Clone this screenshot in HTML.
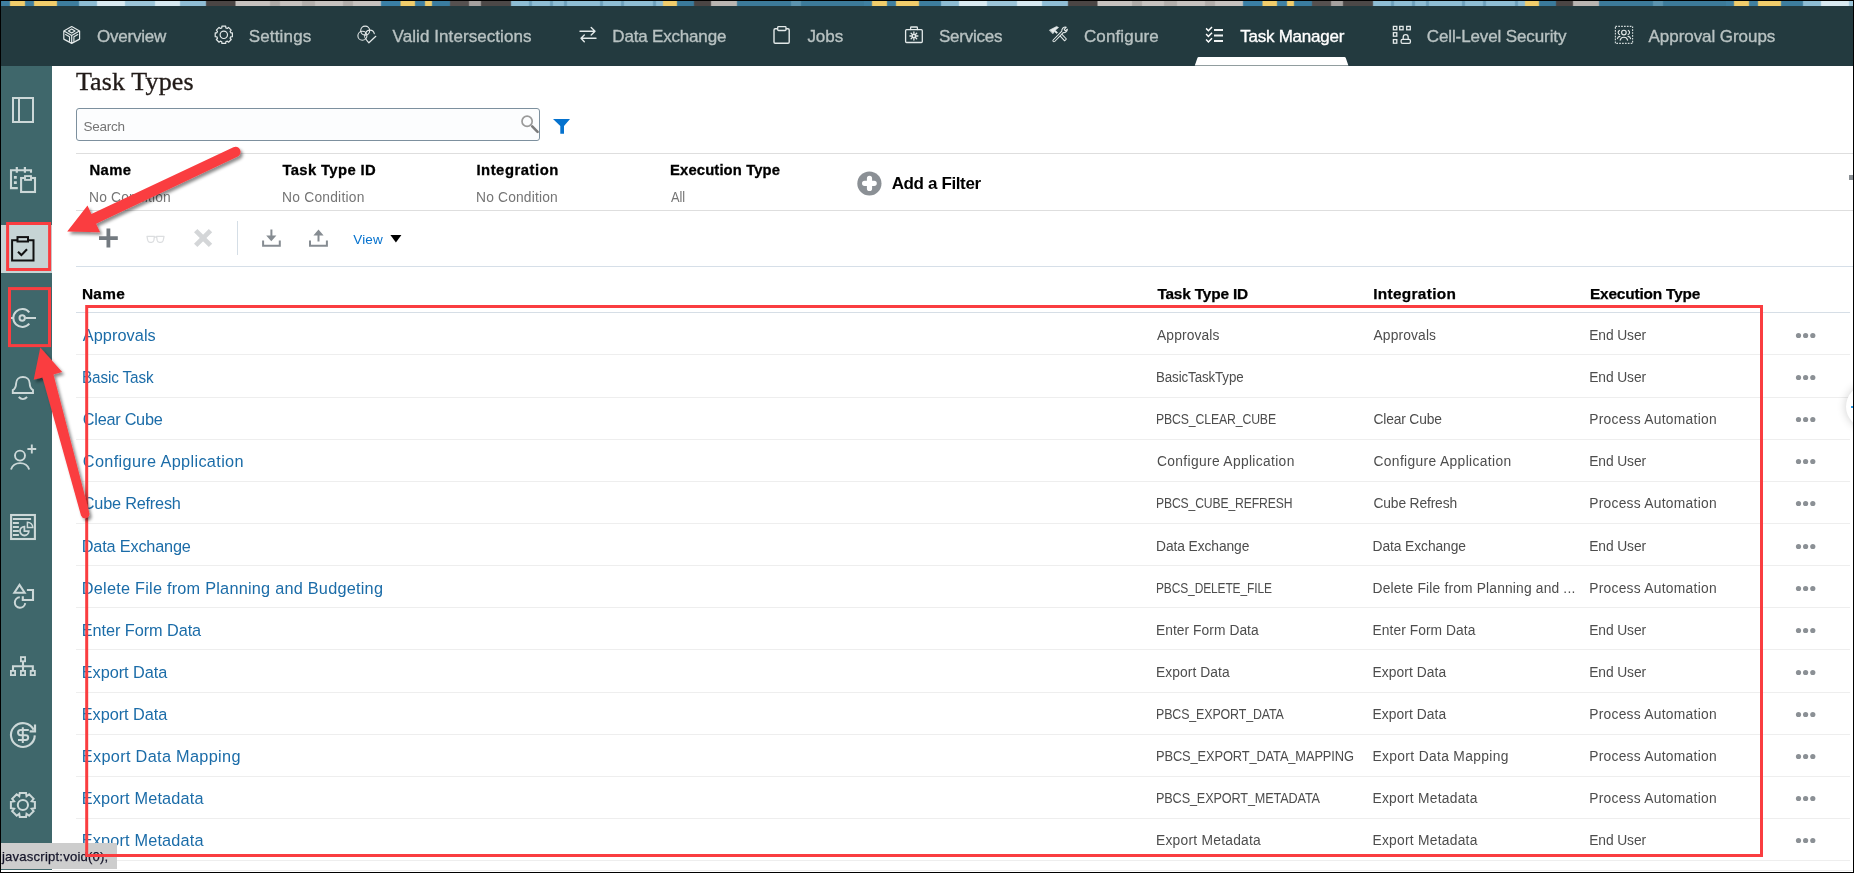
<!DOCTYPE html>
<html><head><meta charset="utf-8"><title>Task Types</title>
<style>
html,body{margin:0;padding:0}
body{width:1854px;height:873px;overflow:hidden;position:relative;background:#fff;font-family:"Liberation Sans", sans-serif}
.abs{position:absolute}
.t{position:absolute;white-space:pre;line-height:1;font-family:"Liberation Sans", sans-serif;z-index:8}
.rl{position:absolute;left:76px;width:1774px;height:1px;background:#eeeeee}
.hl{position:absolute;left:76px;width:1778px;height:1px;background:#dedede}
</style></head><body>
<!-- decorative strip + nav -->
<div class="abs" style="left:1px;top:1px;width:1852px;height:5px;background:repeating-linear-gradient(90deg,#3f7fa0 0.7px,#3f7fa0 8.3px,#f1cd6b 9.7px,#f1cd6b 23.3px,#3f7fa0 24.7px,#3f7fa0 32.3px,#f1cd6b 33.7px,#f1cd6b 55.3px,#3d7d9e 56.7px,#3d7d9e 77.3px,#8dbcd3 78.7px,#8dbcd3 95.3px,#d9eaf1 96.7px,#d9eaf1 123.3px,#9cc5d9 124.7px,#9cc5d9 153.3px,#d6e9f1 154.7px,#d6e9f1 178.3px,#8fbdd5 179.7px,#8fbdd5 204.3px,#4a4544 205.7px,#4a4544 233.8px,#c6c2bf 235.2px,#c6c2bf 268.3px,#aeaaa7 269.7px,#aeaaa7 278.3px,#c6c2bf 279.7px,#c6c2bf 300.3px,#b2aeab 301.7px,#b2aeab 313.3px,#c6c2bf 314.7px,#c6c2bf 341.3px,#b0aca9 342.7px,#b0aca9 351.3px,#c6c2bf 352.7px,#c6c2bf 379.3px,#3a7fa5 380.7px,#3a7fa5 398.8px,#f1cd6b 400.2px,#f1cd6b 413.3px,#3f81a4 414.7px,#3f81a4 423.3px,#f1cd6b 424.7px,#f1cd6b 430.3px,#3a7c9f 431.7px,#3a7c9f 448.3px,#55504f 449.7px,#55504f 467.3px,#a5a19f 468.7px,#a5a19f 479.3px,#4c4847 480.7px,#4c4847 509.3px,#8ebdd4 510.7px,#8ebdd4 527.3px,#6c9fba 528.7px,#6c9fba 530.3px,#8ebdd4 531.7px,#8ebdd4 548.3px,#6c9fba 549.7px,#6c9fba 551.3px,#8ebdd4 552.7px,#8ebdd4 562.3px,#6c9fba 563.7px,#6c9fba 565.3px,#8ebdd4 566.7px,#8ebdd4 598.3px,#6c9fba 599.7px,#6c9fba 601.3px,#8ebdd4 602.7px,#8ebdd4 619.3px,#6c9fba 620.7px,#6c9fba 622.3px,#8ebdd4 623.7px,#8ebdd4 651.3px,#6c9fba 652.7px,#6c9fba 654.3px,#8ebdd4 655.7px,#8ebdd4 661.3px,#f1cd6b 662.7px,#f1cd6b 675.3px,#3a7a9b 676.7px,#3a7a9b 692.3px,#4a4544 693.7px,#4a4544 709.3px,#b9b5b2 710.7px,#b9b5b2 735.3px,#3c7a99 736.7px,#3c7a99 789.3px,#5b93ae 790.7px,#5b93ae 799.3px,#3c7a99 800.7px,#3c7a99 862.6999999999999px)"></div>
<div class="abs" style="left:1px;top:6px;width:1852px;height:59.5px;background:#233a3f"></div>
<svg class="abs" style="left:1190px;top:54px" width="164" height="12" viewBox="1190 54 164 12"><path d="M1194.8 65.6L1197.4 57.9Q1197.7 56.9 1198.8 56.9H1344.4Q1345.5 56.9 1345.8 57.9L1348.4 65.6Z" fill="#fff"/></svg>

<svg class="abs" style="left:0;top:0" width="1854" height="66" viewBox="0 0 1854 66" fill="none" stroke="#e3e9e9" stroke-width="1.3" stroke-linejoin="round" stroke-linecap="round">
 <!-- overview cube -->
 <path d="M71.7 26.6L79.6 31V39.1L71.7 43.4L63.8 39.1V31Z M64 31.1L71.7 35.5L79.4 31.1 M71.7 35.5V43.2" stroke-width="1.2"/>
 <path d="M71.7 28.9L75 30.9L71.7 32.9L68.4 30.9Z M65.6 34.5L69.5 36.8V41.3 M77.8 34.5L73.9 36.8V41.3" stroke-width="1.15"/>
 <!-- settings gear -->
 <path d="M221.79 27.89L221.88 26.21L225.72 26.21L225.81 27.89L227.27 28.49L228.52 27.37L231.23 30.08L230.11 31.33L230.71 32.79L232.39 32.88L232.39 36.72L230.71 36.81L230.11 38.27L231.23 39.52L228.52 42.23L227.27 41.11L225.81 41.71L225.72 43.39L221.88 43.39L221.79 41.71L220.33 41.11L219.08 42.23L216.37 39.52L217.49 38.27L216.89 36.81L215.21 36.72L215.21 32.88L216.89 32.79L217.49 31.33L216.37 30.08L219.08 27.37L220.33 28.49Z" stroke-width="1.2"/>
 <circle cx="223.8" cy="34.8" r="3.7" stroke-width="1.2"/>
 <!-- valid intersections -->
 <circle cx="365.2" cy="30.6" r="4.5" stroke-width="1.1"/>
 <circle cx="362.4" cy="35.8" r="4.5" stroke-width="1.1"/>
 <path d="M366.4 39.6A4.5 4.5 0 0 1 365.6 33.4A4.5 4.5 0 0 1 374.3 33.6" stroke-width="1.1"/>
 <path d="M366.8 40.3L368.9 42.8L375.8 36.3" stroke-width="1.2"/>
 <!-- data exchange -->
 <path d="M580 31.3H595 M591.2 27.4L595 31.3L591.2 35 M596 38.2H581 M584.3 35L581 38.2L584.3 41.8" stroke-width="1.4"/>
 <!-- jobs clipboard -->
 <path d="M777.2 28.8H775.2A1.2 1.2 0 0 0 774 30V42A1.2 1.2 0 0 0 775.2 43.2H788A1.2 1.2 0 0 0 789.2 42V30A1.2 1.2 0 0 0 788 28.8H786.4" stroke-width="1.4"/>
 <rect x="777.7" y="26.7" width="8.3" height="3.8" rx="0.8" stroke-width="1.3"/>
 <!-- services -->
 <rect x="905.6" y="29.7" width="16.7" height="12.8" rx="1" stroke-width="1.3"/>
 <path d="M910.6 29.6V27.8A0.8 0.8 0 0 1 911.4 27H916.6A0.8 0.8 0 0 1 917.4 27.8V29.6" stroke-width="1.3"/>
 <g stroke-width="1.3"><path d="M913.9 32V40 M909.9 36H917.9 M911.1 33.2L916.7 38.8 M916.7 33.2L911.1 38.8"/></g>
 <circle cx="913.9" cy="36" r="2.3" fill="#e3e9e9" stroke="none"/>
 <circle cx="913.9" cy="36" r="0.9" fill="#233a3f" stroke="none"/>
 <!-- configure: wrench + hammer -->
 <path d="M1053.2 40L1061.8 31.2A3.6 3.6 0 0 1 1066.3 27.2L1064.2 29.4L1065.3 30.9L1067.4 29.2A3.6 3.6 0 0 1 1063.2 32.6L1054.7 41.5A1.05 1.05 0 0 1 1053.2 40Z" stroke-width="1.05"/>
 <path d="M1060.3 36.2L1064.6 40.8L1066.4 39L1062 34.4" stroke-width="1.05"/>
 <path d="M1049.6 30.1L1056.6 26.4L1058.6 27.5L1055.3 30.2L1057.6 32.6L1056.4 33.4L1054.6 31.6L1053 33.6Z" fill="#e3e9e9" stroke-width="0.6"/>
 <!-- task manager checklist -->
 <g stroke="#ffffff" stroke-width="1.5"><path d="M1206.1 28.4L1208.4 30.7L1212 27 M1206.1 34L1208.4 36.4L1212 32.7 M1206.1 39.6L1208.4 42L1212 38.3" stroke-linecap="butt" stroke-linejoin="miter"/></g>
 <g stroke="#f0f3f3" stroke-width="1.9" stroke-linecap="butt"><path d="M1214 30H1223 M1214 35.5H1223 M1214 41H1223"/></g>
 <!-- cell-level security -->
 <g stroke-width="1.3" stroke-linejoin="miter"><rect x="1393.4" y="26.4" width="3.4" height="3.4"/><rect x="1399.7" y="26.4" width="3.4" height="3.4"/><rect x="1406.7" y="26.4" width="3.6" height="3.4"/><rect x="1393.4" y="32.7" width="3.4" height="3.5"/><rect x="1393.4" y="39.6" width="3.4" height="3.6"/></g>
 <rect x="1401.1" y="39.3" width="9.3" height="4" rx="1.4" stroke-width="1.3"/>
 <path d="M1403.2 39V37.4A2.5 2.7 0 0 1 1408.2 37.4V39" stroke-width="1.3"/>
 <!-- approval groups -->
 <rect x="1615.4" y="26.4" width="17.2" height="17" stroke-width="1.15" stroke-dasharray="1.7 1.17" stroke-linecap="butt" stroke="#d2dada"/>
 <circle cx="1623.9" cy="32.6" r="2.3" stroke-width="1.1"/>
 <path d="M1620.2 40.2A3.8 3.8 0 0 1 1627.6 40.2" stroke-width="1.2"/>
 <path d="M1619.4 30.4A2.3 2.3 0 0 0 1619.6 34.6 M1617.4 38.6A3 3 0 0 1 1620 36.4 M1628.3 30.4A2.3 2.3 0 0 1 1628.1 34.6 M1630.6 38.6A3 3 0 0 0 1628 36.4" stroke-width="1.1"/>
</svg>
<!-- sidebar -->
<div class="abs" style="left:1px;top:65.5px;width:50.6px;height:804.5px;background:#3f676b"></div>
<div class="abs" style="left:1px;top:224.8px;width:50.8px;height:48px;background:#c6d4d5"></div>

<svg class="abs" style="left:0;top:66px" width="52" height="807" viewBox="0 66 52 807" fill="none" stroke="#ccd8d8" stroke-width="2" stroke-linejoin="miter">
 <!-- 1 panel -->
 <rect x="13" y="98" width="20" height="24"/><path d="M19 98V122"/>
 <!-- 2 calendar + clipboard -->
 <path d="M17.8 188.1H11V170.2H31V172.8" stroke-width="2.1"/>
 <path d="M16.8 167.1V172.8 M24.9 167.1V172.8" stroke-width="2.2"/>
 <path d="M13.9 177.4H16.8 M13.9 182.6H16.8" stroke-width="2.9"/>
 <rect x="21.1" y="178" width="13.9" height="14" stroke-width="2.1"/>
 <rect x="25" y="176.1" width="6" height="3.8" stroke-width="1.9" fill="#3f676b"/>
 <!-- 4 C-arc icon -->
 <path d="M29.3 312.3A9 9 0 1 0 29.3 323.7" stroke-width="2"/>
 <circle cx="22.2" cy="318" r="2.7" stroke-width="2"/>
 <path d="M25.4 318H36 M11 318H13.4" stroke-width="2"/>
 <!-- 5 bell -->
 <path d="M12.8 393H33V390.1C30.5 388.6 29.8 386.4 29.7 383.4C29.6 379.4 26.6 377 22.9 377C19.2 377 16.2 379.4 16.1 383.4C16 386.4 15.3 388.6 12.8 390.1Z" stroke-width="1.9" stroke-linejoin="miter"/>
 <path d="M18.7 397Q22.9 401.2 27.1 397" stroke-width="1.9"/>
 <!-- 6 person plus -->
 <circle cx="20" cy="455.6" r="5" stroke-width="1.9"/>
 <path d="M11 469.4A9.4 8.4 0 0 1 29.2 469.4" stroke-width="1.9"/>
 <path d="M31.8 444.6V453.4 M27.4 449H36.2" stroke-width="1.9"/>
 <!-- 7 report -->
 <rect x="11.1" y="515" width="23.8" height="24" stroke-width="2.1"/>
 <path d="M12.9 519H31.1 M12.9 523H18.9 M12.9 527H18.9 M12.9 531H18.9 M12.9 535H18.9" stroke-width="1.8"/>
 <path d="M24.4 526.7A4.4 4.4 0 1 0 28.8 531.1H24.4Z" stroke-width="1.8"/>
 <path d="M27.4 522.2V527.6H32.8A5.4 5.4 0 0 0 27.4 522.2Z" stroke-width="1.5"/>
 <!-- 8 shapes -->
 <path d="M19.5 584.9L24.7 592.8H14.3Z" stroke-width="2"/>
 <path d="M26.9 590H33V600H22.8V596.2" stroke-width="2.1"/>
 <path d="M19.8 597.3A5.2 5.2 0 1 0 25.2 603.1" stroke-width="2"/>
 <!-- 9 hierarchy -->
 <g stroke-width="1.8"><rect x="20.9" y="657.1" width="4.2" height="4.2"/><rect x="10.9" y="670.9" width="4.2" height="4.2"/><rect x="20.9" y="670.9" width="4.2" height="4.2"/><rect x="30.7" y="670.9" width="4.2" height="4.2"/>
 <path d="M23 662V670 M13 670V666.3H32.8V670" stroke-width="2.1"/></g>
 <!-- 10 dollar refresh -->
 <path d="M33.6 729.8A11.9 11.9 0 1 0 34.8 735.4" stroke-width="2.1"/>
 <path d="M35 724.4V731.3H29.6" stroke-width="2.2" stroke-linejoin="miter"/>
 <path d="M28.8 729.9H20.7A2.65 2.65 0 0 0 20.7 735.2H25.8A2.4 2.4 0 0 1 25.8 740H18 M22.8 727.2V743" stroke-width="2"/>
 <!-- 11 gear -->
 <path d="M19.75 793.00L26.05 793.00L26.54 796.22L29.16 794.29L33.61 798.74L31.68 801.36L34.90 801.85L34.90 808.15L31.68 808.64L33.61 811.26L29.16 815.71L26.54 813.78L26.05 817.00L19.75 817.00L19.26 813.78L16.64 815.71L12.19 811.26L14.12 808.64L10.90 808.15L10.90 801.85L14.12 801.36L12.19 798.74L16.64 794.29L19.26 796.22Z" stroke-width="2" stroke-linejoin="miter"/>
 <circle cx="22.9" cy="805" r="5.1" stroke-width="2"/>
</svg>
<!-- selected item icon (black) -->
<svg class="abs" style="left:0;top:222px;z-index:6" width="52" height="52" viewBox="0 222 52 52" fill="none" stroke="#111" stroke-width="2" stroke-linejoin="miter">
 <path d="M17 240.2H12.1V260.6H33.5V240.2H28.6"/>
 <rect x="17.5" y="237.1" width="10.5" height="4.4"/>
 <path d="M18 251.8L21.4 255.1L27 249.2" stroke-width="2.1"/>
</svg>
<!-- search -->
<div class="abs" style="left:76px;top:108px;width:462px;height:31px;border:1px solid #7d909e;border-radius:3px;background:#fcfdfe"></div>
<svg class="abs" style="left:515px;top:110px" width="60" height="28" viewBox="515 110 60 28" fill="none">
 <circle cx="527.1" cy="121.2" r="5.1" stroke="#9a9a9a" stroke-width="1.7"/>
 <path d="M532.2 126.4L537.6 131.8" stroke="#7c7c7c" stroke-width="2.6" stroke-linecap="round"/>
 <path d="M553 119.1H570L564 126V133.7H560.3V126Z" fill="#0572ce"/>
</svg>
<!-- filter bar lines -->
<div class="hl" style="top:153px"></div>
<div class="hl" style="top:210px"></div>
<div class="hl" style="top:266px;background:#d6dfe8"></div>
<!-- add filter icon -->
<svg class="abs" style="left:856px;top:170px" width="28" height="28" viewBox="856 170 28 28"><circle cx="869.4" cy="183.5" r="12.1" fill="#8b9095"/><path d="M864.6 183.3H874.2 M869.5 178.4V188.5" stroke="#fff" stroke-width="5.2" stroke-linecap="round"/></svg>
<!-- toolbar -->
<svg class="abs" style="left:90px;top:218px" width="330" height="44" viewBox="90 218 330 44" fill="none">
 <path d="M99 238.1H117.8 M108.4 228.6V247.6" stroke="#737a80" stroke-width="3.8"/>
 <g stroke="#dcdee0" stroke-width="1.25" stroke-linejoin="round"><path d="M147 236.3H154.4L153.9 240.2Q153.5 242.3 151.6 242.3H150Q148.2 242.3 147.7 240.2Z M156.6 236.3H164L163.3 240.2Q162.8 242.3 161 242.3H159.4Q157.5 242.3 157.1 240.2Z M154.4 237.4Q155.5 236.5 156.6 237.4"/></g>
 <path d="M195.7 230.6L210.5 245.4 M210.5 230.6L195.7 245.4" stroke="#d4d6d8" stroke-width="4.8"/>
 <path d="M237.5 221V255" stroke="#d5dee6" stroke-width="1"/>
 <g stroke="#868c92" stroke-width="2"><path d="M263.1 240.6V245.8H279.8V240.6 M310 240.6V245.8H326.9V240.6"/>
 <path d="M271.4 229.6V237 M318.5 241.4V234"/></g>
 <path d="M266.2 235.6H276.4L271.3 241.2Z M313.4 235.4H323.6L318.5 229.6Z" fill="#868c92"/>
 <path d="M390.4 235H401.4L395.9 242.6Z" fill="#000"/>
</svg>
<!-- table -->
<div class="hl" style="top:312px;width:1774px;background:#d6dee6"></div>
<div class="rl" style="top:354px"></div><div class="rl" style="top:397px"></div><div class="rl" style="top:439px"></div><div class="rl" style="top:481px"></div><div class="rl" style="top:523px"></div><div class="rl" style="top:565px"></div><div class="rl" style="top:607px"></div><div class="rl" style="top:649px"></div><div class="rl" style="top:692px"></div><div class="rl" style="top:734px"></div><div class="rl" style="top:776px"></div><div class="rl" style="top:818px"></div><div class="rl" style="top:860px"></div>
<svg class="abs" style="left:1790px;top:320px" width="30" height="540" viewBox="1790 320 30 540" fill="#8b9095"><circle cx="1798.5" cy="335.5" r="2.6"/><circle cx="1805.6" cy="335.5" r="2.6"/><circle cx="1812.8" cy="335.5" r="2.6"/><circle cx="1798.5" cy="377.5" r="2.6"/><circle cx="1805.6" cy="377.5" r="2.6"/><circle cx="1812.8" cy="377.5" r="2.6"/><circle cx="1798.5" cy="419.5" r="2.6"/><circle cx="1805.6" cy="419.5" r="2.6"/><circle cx="1812.8" cy="419.5" r="2.6"/><circle cx="1798.5" cy="461.5" r="2.6"/><circle cx="1805.6" cy="461.5" r="2.6"/><circle cx="1812.8" cy="461.5" r="2.6"/><circle cx="1798.5" cy="503.5" r="2.6"/><circle cx="1805.6" cy="503.5" r="2.6"/><circle cx="1812.8" cy="503.5" r="2.6"/><circle cx="1798.5" cy="546.5" r="2.6"/><circle cx="1805.6" cy="546.5" r="2.6"/><circle cx="1812.8" cy="546.5" r="2.6"/><circle cx="1798.5" cy="588.5" r="2.6"/><circle cx="1805.6" cy="588.5" r="2.6"/><circle cx="1812.8" cy="588.5" r="2.6"/><circle cx="1798.5" cy="630.5" r="2.6"/><circle cx="1805.6" cy="630.5" r="2.6"/><circle cx="1812.8" cy="630.5" r="2.6"/><circle cx="1798.5" cy="672.5" r="2.6"/><circle cx="1805.6" cy="672.5" r="2.6"/><circle cx="1812.8" cy="672.5" r="2.6"/><circle cx="1798.5" cy="714.5" r="2.6"/><circle cx="1805.6" cy="714.5" r="2.6"/><circle cx="1812.8" cy="714.5" r="2.6"/><circle cx="1798.5" cy="756.5" r="2.6"/><circle cx="1805.6" cy="756.5" r="2.6"/><circle cx="1812.8" cy="756.5" r="2.6"/><circle cx="1798.5" cy="798.5" r="2.6"/><circle cx="1805.6" cy="798.5" r="2.6"/><circle cx="1812.8" cy="798.5" r="2.6"/><circle cx="1798.5" cy="840.5" r="2.6"/><circle cx="1805.6" cy="840.5" r="2.6"/><circle cx="1812.8" cy="840.5" r="2.6"/></svg>
<!-- right edge details -->
<div class="abs" style="left:1800px;top:360px;width:53px;height:94px;overflow:hidden"><div class="abs" style="left:45.6px;top:25px;width:43px;height:43px;border-radius:50%;background:#fff;box-shadow:0 0 9px 1px rgba(0,0,0,0.16)"></div></div>
<div class="abs" style="left:1851px;top:405.5px;width:2px;height:2px;background:#2b9be8"></div>
<div class="abs" style="left:1849px;top:175px;width:4px;height:5px;background:#8b9095"></div>
<div class="abs" style="left:52px;top:870px;width:1801px;height:1px;background:#efefef"></div>
<!-- texts -->
<div class="abs" style="left:0;top:0;width:1854px;height:873px;will-change:transform;z-index:8">
<div class="t" style="left:97.00px;top:27px;line-height:19px;font-size:17px;color:#b8c2c2;letter-spacing:-0.224px;-webkit-text-stroke:0.35px #b8c2c2">Overview</div>
<div class="t" style="left:248.70px;top:27px;line-height:19px;font-size:17px;color:#b8c2c2;letter-spacing:0.168px;-webkit-text-stroke:0.35px #b8c2c2">Settings</div>
<div class="t" style="left:392.60px;top:27px;line-height:19px;font-size:17px;color:#b8c2c2;letter-spacing:0.070px;-webkit-text-stroke:0.35px #b8c2c2">Valid Intersections</div>
<div class="t" style="left:612.30px;top:27px;line-height:19px;font-size:17px;color:#b8c2c2;letter-spacing:-0.182px;-webkit-text-stroke:0.35px #b8c2c2">Data Exchange</div>
<div class="t" style="left:807.40px;top:27px;line-height:19px;font-size:17px;color:#b8c2c2;letter-spacing:-0.036px;-webkit-text-stroke:0.35px #b8c2c2">Jobs</div>
<div class="t" style="left:939.00px;top:27px;line-height:19px;font-size:17px;color:#b8c2c2;letter-spacing:-0.241px;-webkit-text-stroke:0.35px #b8c2c2">Services</div>
<div class="t" style="left:1083.90px;top:27px;line-height:19px;font-size:17px;color:#b8c2c2;letter-spacing:0.143px;-webkit-text-stroke:0.35px #b8c2c2">Configure</div>
<div class="t" style="left:1240.20px;top:27px;line-height:19px;font-size:17px;color:#ffffff;letter-spacing:-0.237px;-webkit-text-stroke:0.35px #ffffff">Task Manager</div>
<div class="t" style="left:1426.80px;top:27px;line-height:19px;font-size:17px;color:#b8c2c2;letter-spacing:-0.118px;-webkit-text-stroke:0.35px #b8c2c2">Cell-Level Security</div>
<div class="t" style="left:1648.60px;top:27px;line-height:19px;font-size:17px;color:#b8c2c2;letter-spacing:-0.062px;-webkit-text-stroke:0.35px #b8c2c2">Approval Groups</div>
<div class="t" style="left:75.90px;top:67px;line-height:29px;font-size:26px;font-family:&quot;Liberation Serif&quot;,serif;color:#221b18;letter-spacing:0.141px;-webkit-text-stroke:0.35px #221b18">Task Types</div>
<div class="t" style="left:83.50px;top:119px;line-height:15px;font-size:13.5px;color:#757575;letter-spacing:-0.273px">Search</div>
<div class="t" style="left:89.50px;top:162px;line-height:16px;font-size:14.8px;font-weight:700;color:#000000;letter-spacing:0.376px;-webkit-text-stroke:0.3px #000000">Name</div>
<div class="t" style="left:282.40px;top:162px;line-height:16px;font-size:14.8px;font-weight:700;color:#000000;letter-spacing:0.382px;-webkit-text-stroke:0.3px #000000">Task Type ID</div>
<div class="t" style="left:476.40px;top:162px;line-height:16px;font-size:14.8px;font-weight:700;color:#000000;letter-spacing:0.549px;-webkit-text-stroke:0.3px #000000">Integration</div>
<div class="t" style="left:670.10px;top:162px;line-height:16px;font-size:14.8px;font-weight:700;color:#000000;letter-spacing:0.128px;-webkit-text-stroke:0.3px #000000">Execution Type</div>
<div class="t" style="left:89.10px;top:190px;line-height:15px;font-size:13.8px;color:#757575;letter-spacing:0.165px">No Condition</div>
<div class="t" style="left:282.00px;top:190px;line-height:15px;font-size:13.8px;color:#757575;letter-spacing:0.237px">No Condition</div>
<div class="t" style="left:476.00px;top:190px;line-height:15px;font-size:13.8px;color:#757575;letter-spacing:0.174px">No Condition</div>
<div class="t" style="left:670.50px;top:190px;line-height:15px;font-size:13.8px;color:#757575;letter-spacing:-0.115px;transform:scaleX(0.9309);transform-origin:0 0">All</div>
<div class="t" style="left:891.70px;top:174px;line-height:19px;font-size:17px;font-weight:700;color:#000000;letter-spacing:-0.372px">Add a Filter</div>
<div class="t" style="left:353.30px;top:232px;line-height:15px;font-size:13.5px;color:#0572ce;letter-spacing:0.111px">View</div>
<div class="t" style="left:81.90px;top:285px;line-height:17px;font-size:15.4px;font-weight:700;color:#000000;letter-spacing:0.314px;-webkit-text-stroke:0.25px #000000">Name</div>
<div class="t" style="left:1157.40px;top:285px;line-height:17px;font-size:15.4px;font-weight:700;color:#000000;letter-spacing:-0.177px;-webkit-text-stroke:0.25px #000000">Task Type ID</div>
<div class="t" style="left:1373.20px;top:285px;line-height:17px;font-size:15.4px;font-weight:700;color:#000000;letter-spacing:0.319px;-webkit-text-stroke:0.25px #000000">Integration</div>
<div class="t" style="left:1590.00px;top:285px;line-height:17px;font-size:15.4px;font-weight:700;color:#000000;letter-spacing:-0.173px;-webkit-text-stroke:0.25px #000000">Execution Type</div>
<div class="t" style="left:82.80px;top:326px;line-height:18px;font-size:16.3px;color:#1b6ca8;letter-spacing:0.068px">Approvals</div>
<div class="t" style="left:1157.00px;top:328px;line-height:15px;font-size:13.8px;color:#4d4d4d;letter-spacing:0.131px">Approvals</div>
<div class="t" style="left:1373.50px;top:328px;line-height:15px;font-size:13.8px;color:#4d4d4d;letter-spacing:0.143px">Approvals</div>
<div class="t" style="left:1589.20px;top:328px;line-height:15px;font-size:13.8px;color:#4d4d4d;letter-spacing:-0.088px">End User</div>
<div class="t" style="left:81.86px;top:368px;line-height:18px;font-size:16.3px;color:#1b6ca8;letter-spacing:-0.129px;transform:scaleX(0.9385);transform-origin:0 0">Basic Task</div>
<div class="t" style="left:1156.03px;top:370px;line-height:15px;font-size:13.8px;color:#4d4d4d;letter-spacing:-0.114px;transform:scaleX(0.9670);transform-origin:0 0">BasicTaskType</div>
<div class="t" style="left:1589.20px;top:370px;line-height:15px;font-size:13.8px;color:#4d4d4d;letter-spacing:-0.088px">End User</div>
<div class="t" style="left:82.80px;top:410px;line-height:18px;font-size:16.3px;color:#1b6ca8;letter-spacing:-0.266px">Clear Cube</div>
<div class="t" style="left:1156.11px;top:412px;line-height:15px;font-size:13.8px;color:#4d4d4d;letter-spacing:-0.146px;transform:scaleX(0.8880);transform-origin:0 0">PBCS_CLEAR_CUBE</div>
<div class="t" style="left:1373.50px;top:412px;line-height:15px;font-size:13.8px;color:#4d4d4d;letter-spacing:-0.157px">Clear Cube</div>
<div class="t" style="left:1589.20px;top:412px;line-height:15px;font-size:13.8px;color:#4d4d4d;letter-spacing:0.277px">Process Automation</div>
<div class="t" style="left:82.80px;top:452px;line-height:18px;font-size:16.3px;color:#1b6ca8;letter-spacing:0.344px">Configure Application</div>
<div class="t" style="left:1157.00px;top:454px;line-height:15px;font-size:13.8px;color:#4d4d4d;letter-spacing:0.346px">Configure Application</div>
<div class="t" style="left:1373.50px;top:454px;line-height:15px;font-size:13.8px;color:#4d4d4d;letter-spacing:0.361px">Configure Application</div>
<div class="t" style="left:1589.20px;top:454px;line-height:15px;font-size:13.8px;color:#4d4d4d;letter-spacing:-0.088px">End User</div>
<div class="t" style="left:82.80px;top:494px;line-height:18px;font-size:16.3px;color:#1b6ca8;letter-spacing:-0.218px">Cube Refresh</div>
<div class="t" style="left:1156.12px;top:496px;line-height:15px;font-size:13.8px;color:#4d4d4d;letter-spacing:-0.146px;transform:scaleX(0.8811);transform-origin:0 0">PBCS_CUBE_REFRESH</div>
<div class="t" style="left:1373.50px;top:496px;line-height:15px;font-size:13.8px;color:#4d4d4d;letter-spacing:-0.141px">Cube Refresh</div>
<div class="t" style="left:1589.20px;top:496px;line-height:15px;font-size:13.8px;color:#4d4d4d;letter-spacing:0.277px">Process Automation</div>
<div class="t" style="left:81.80px;top:537px;line-height:18px;font-size:16.3px;color:#1b6ca8;letter-spacing:-0.190px">Data Exchange</div>
<div class="t" style="left:1156.00px;top:539px;line-height:15px;font-size:13.8px;color:#4d4d4d;letter-spacing:-0.081px">Data Exchange</div>
<div class="t" style="left:1372.50px;top:539px;line-height:15px;font-size:13.8px;color:#4d4d4d;letter-spacing:-0.072px">Data Exchange</div>
<div class="t" style="left:1589.20px;top:539px;line-height:15px;font-size:13.8px;color:#4d4d4d;letter-spacing:-0.088px">End User</div>
<div class="t" style="left:81.80px;top:579px;line-height:18px;font-size:16.3px;color:#1b6ca8;letter-spacing:0.232px">Delete File from Planning and Budgeting</div>
<div class="t" style="left:1156.13px;top:581px;line-height:15px;font-size:13.8px;color:#4d4d4d;letter-spacing:-0.135px;transform:scaleX(0.8671);transform-origin:0 0">PBCS_DELETE_FILE</div>
<div class="t" style="left:1372.50px;top:581px;line-height:15px;font-size:13.8px;color:#4d4d4d;letter-spacing:0.176px">Delete File from Planning and ...</div>
<div class="t" style="left:1589.20px;top:581px;line-height:15px;font-size:13.8px;color:#4d4d4d;letter-spacing:0.277px">Process Automation</div>
<div class="t" style="left:81.80px;top:621px;line-height:18px;font-size:16.3px;color:#1b6ca8;letter-spacing:-0.070px">Enter Form Data</div>
<div class="t" style="left:1156.00px;top:623px;line-height:15px;font-size:13.8px;color:#4d4d4d;letter-spacing:0.050px">Enter Form Data</div>
<div class="t" style="left:1372.50px;top:623px;line-height:15px;font-size:13.8px;color:#4d4d4d;letter-spacing:0.064px">Enter Form Data</div>
<div class="t" style="left:1589.20px;top:623px;line-height:15px;font-size:13.8px;color:#4d4d4d;letter-spacing:-0.088px">End User</div>
<div class="t" style="left:81.80px;top:663px;line-height:18px;font-size:16.3px;color:#1b6ca8;letter-spacing:-0.041px">Export Data</div>
<div class="t" style="left:1156.00px;top:665px;line-height:15px;font-size:13.8px;color:#4d4d4d;letter-spacing:0.072px">Export Data</div>
<div class="t" style="left:1372.50px;top:665px;line-height:15px;font-size:13.8px;color:#4d4d4d;letter-spacing:0.082px">Export Data</div>
<div class="t" style="left:1589.20px;top:665px;line-height:15px;font-size:13.8px;color:#4d4d4d;letter-spacing:-0.088px">End User</div>
<div class="t" style="left:81.80px;top:705px;line-height:18px;font-size:16.3px;color:#1b6ca8;letter-spacing:-0.041px">Export Data</div>
<div class="t" style="left:1156.10px;top:707px;line-height:15px;font-size:13.8px;color:#4d4d4d;letter-spacing:-0.144px;transform:scaleX(0.9007);transform-origin:0 0">PBCS_EXPORT_DATA</div>
<div class="t" style="left:1372.50px;top:707px;line-height:15px;font-size:13.8px;color:#4d4d4d;letter-spacing:0.082px">Export Data</div>
<div class="t" style="left:1589.20px;top:707px;line-height:15px;font-size:13.8px;color:#4d4d4d;letter-spacing:0.277px">Process Automation</div>
<div class="t" style="left:81.80px;top:747px;line-height:18px;font-size:16.3px;color:#1b6ca8;letter-spacing:0.317px">Export Data Mapping</div>
<div class="t" style="left:1156.07px;top:749px;line-height:15px;font-size:13.8px;color:#4d4d4d;letter-spacing:-0.139px;transform:scaleX(0.9325);transform-origin:0 0">PBCS_EXPORT_DATA_MAPPING</div>
<div class="t" style="left:1372.50px;top:749px;line-height:15px;font-size:13.8px;color:#4d4d4d;letter-spacing:0.348px">Export Data Mapping</div>
<div class="t" style="left:1589.20px;top:749px;line-height:15px;font-size:13.8px;color:#4d4d4d;letter-spacing:0.277px">Process Automation</div>
<div class="t" style="left:81.80px;top:789px;line-height:18px;font-size:16.3px;color:#1b6ca8;letter-spacing:0.157px">Export Metadata</div>
<div class="t" style="left:1156.08px;top:791px;line-height:15px;font-size:13.8px;color:#4d4d4d;letter-spacing:-0.143px;transform:scaleX(0.9175);transform-origin:0 0">PBCS_EXPORT_METADATA</div>
<div class="t" style="left:1372.50px;top:791px;line-height:15px;font-size:13.8px;color:#4d4d4d;letter-spacing:0.260px">Export Metadata</div>
<div class="t" style="left:1589.20px;top:791px;line-height:15px;font-size:13.8px;color:#4d4d4d;letter-spacing:0.277px">Process Automation</div>
<div class="t" style="left:81.80px;top:831px;line-height:18px;font-size:16.3px;color:#1b6ca8;letter-spacing:0.157px">Export Metadata</div>
<div class="t" style="left:1156.00px;top:833px;line-height:15px;font-size:13.8px;color:#4d4d4d;letter-spacing:0.253px">Export Metadata</div>
<div class="t" style="left:1372.50px;top:833px;line-height:15px;font-size:13.8px;color:#4d4d4d;letter-spacing:0.260px">Export Metadata</div>
<div class="t" style="left:1589.20px;top:833px;line-height:15px;font-size:13.8px;color:#4d4d4d;letter-spacing:-0.088px">End User</div>
</div>
<div class="t" style="left:2.20px;top:849px;line-height:15px;font-size:13.1px;color:#15152a;letter-spacing:0.202px;z-index:15;will-change:transform;-webkit-text-stroke:0.25px #15152a">javascript:void(0);</div>
<!-- status bubble -->
<div class="abs" style="left:1px;top:843px;width:116.4px;height:25.6px;background:#cdcdcd;z-index:10"></div>

<svg class="abs" style="left:0;top:0;z-index:20" width="1854" height="873" viewBox="0 0 1854 873">
 <defs><filter id="sh" x="-20%" y="-20%" width="140%" height="140%"><feDropShadow dx="2.2" dy="2.6" stdDeviation="1.8" flood-color="#000" flood-opacity="0.45"/></filter></defs>
 <g fill="none" stroke="#fa3d40" stroke-width="3">
  <rect x="86.7" y="306.5" width="1674.8" height="549"/>
  <rect x="7.6" y="223.5" width="42" height="46"/>
  <rect x="9.5" y="288.6" width="40" height="57"/>
 </g>
 <g fill="#fa3d40" filter="url(#sh)"><path d="M233.4 147.2L91.4 213.9L87.5 205.5L67.2 231.4L100.1 232.2L96.1 223.8L237.8 156.4A5.1 5.1 0 0 0 233.4 147.2Z"/><path d="M89.4 513.3L53.5 374.4L62.2 372.1L40.3 347.4L33.7 379.7L42.5 377.4L81.0 515.5A4.4 4.4 0 0 0 89.4 513.3Z"/></g>
</svg>
<!-- outer black frame -->
<div class="abs" style="left:0;top:0;width:1852px;height:871px;border:1px solid #000;z-index:40;pointer-events:none"></div>
</body></html>
